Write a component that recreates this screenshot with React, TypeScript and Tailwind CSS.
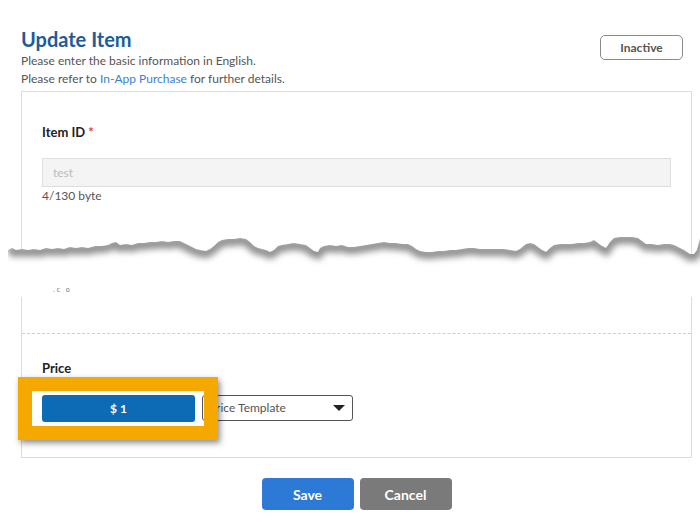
import React from 'react';

const EDGE: [number, number][] = [
  [8, 250], [12, 248], [16, 250], [22, 249], [28, 250], [34, 249], [40, 250], [46, 248], [52, 249],
  [58, 248], [64, 249], [70, 247], [76, 248], [82, 247], [88, 248], [95, 246], [102, 246], [108, 245],
  [112, 243], [116, 242], [120, 245], [126, 244], [132, 245], [138, 243], [144, 243], [150, 242],
  [156, 242], [162, 241], [168, 242], [174, 241], [180, 241], [184, 243], [188, 245], [192, 247],
  [196, 249], [200, 250], [206, 251], [210, 249], [214, 246], [218, 242], [222, 240], [228, 239],
  [234, 239], [240, 238], [246, 239], [250, 242], [254, 246], [258, 248], [262, 249], [266, 250],
  [270, 252], [274, 250], [278, 246], [282, 245], [288, 244], [294, 243], [300, 244], [306, 245],
  [310, 248], [314, 251], [318, 252], [320, 248], [324, 246], [330, 245], [336, 246], [342, 245],
  [348, 247], [354, 247], [360, 246], [366, 245], [372, 244], [378, 243], [384, 242], [390, 243],
  [396, 243], [402, 244], [408, 244], [412, 246], [416, 249], [420, 251], [426, 252], [432, 252],
  [438, 251], [444, 251], [450, 250], [456, 250], [462, 249], [468, 248], [474, 248], [480, 249],
  [486, 249], [492, 249], [498, 249], [504, 249], [510, 250], [516, 251], [520, 249], [526, 244],
  [530, 243], [534, 244], [538, 247], [542, 250], [546, 252], [550, 248], [554, 245], [560, 244],
  [566, 244], [572, 244], [578, 243], [584, 243], [590, 242], [594, 240], [598, 243], [602, 246],
  [606, 248], [610, 242], [614, 238], [620, 237], [626, 237], [632, 237], [638, 238], [642, 241],
  [646, 244], [652, 244], [658, 245], [664, 244], [670, 244], [674, 245], [678, 247], [684, 250],
  [690, 254], [694, 254], [697, 250], [700, 238],
];

function TornEdge() {
  const line = EDGE.map(([x, y]) => `${x},${y}`).join(' ');
  const below = `${line} 700,275 8,275`;
  const shadow = EDGE.map(([x, y]) => `${x},${y + 2}`).join(' ');
  return (
    <svg
      className="absolute left-0 top-[225px] h-[50px] w-[700px]"
      viewBox="0 225 700 50"
      aria-hidden
    >
      <defs>
        <clipPath id="belowEdge">
          <polygon points={below} />
        </clipPath>
        <filter id="tearBlur" x="-5%" y="-100%" width="110%" height="300%">
          <feGaussianBlur stdDeviation="3.2" />
        </filter>
      </defs>
      <polygon points={below} fill="#ffffff" />
      <g clipPath="url(#belowEdge)">
        <polyline points={shadow} fill="none" stroke="#909090" strokeWidth="10" filter="url(#tearBlur)" />
      </g>
    </svg>
  );
}

export default function App() {
  return (
    <div className="relative h-[525px] w-[700px] overflow-hidden bg-white pt-[26px] font-['Lato',sans-serif] text-[#555]">
      <div className="flex items-start justify-between pl-[21px] pr-[17px]">
        <div>
          <h1 className="text-[20px] font-bold leading-[26px] text-[#1d5c98]">Update Item</h1>
          <p className="text-[12px] leading-[18px]">Please enter the basic information in English.</p>
          <p className="text-[12px] leading-[18px]">
            Please refer to <span className="text-[#3a7fd5]">In-App Purchase</span> for further details.
          </p>
        </div>
        <button
          type="button"
          className="mt-[9px] h-[25px] w-[83px] rounded-[5px] border border-[#8a8a8a] text-[12px] font-bold text-[#555]"
        >
          Inactive
        </button>
      </div>

      <div className="ml-[21px] mt-[3px] h-[181px] w-[671px] border-x border-t border-[#dcdcdc] px-[20px] pt-[31px]">
        <label className="block text-[13px] font-bold leading-[18px] text-[#222]">
          Item ID <span className="text-[#e03b3b]">*</span>
        </label>
        <div className="mt-[17px] flex h-[29px] items-center border border-[#dedede] bg-[#f4f4f4] pl-[10px] text-[12px] text-[#bbb]">
          test
        </div>
        <p className="text-[12px] leading-[18px]">4/130 byte</p>
      </div>

      <div className="h-[25px] pl-[53px] pt-[13px] text-[7px] leading-[8px] tracking-[2px] text-[#777]">.c o</div>

      <div className="ml-[21px] h-[161px] w-[671px] border-x border-b border-[#dcdcdc]">
        <div className="h-[36px]" />
        <div className="border-t border-dashed border-[#bfd6d6] px-[20px] pt-[25px]">
          <label className="block text-[13px] font-bold leading-[18px] text-[#222]">Price</label>
          <div className="mt-[18px] flex items-start gap-[7px]">
            <button
              type="button"
              className="h-[27px] w-[153px] rounded-[3px] bg-[#0d6bb6] text-[12px] font-bold text-white"
            >
              $ 1
            </button>
            <div className="flex h-[26px] w-[151px] items-center justify-between rounded-[3px] border border-[#555] pl-[6px] pr-[7px] text-[12px] text-[#555]">
              <span>Price Template</span>
              <span className="h-0 w-0 border-x-[6px] border-t-[6px] border-x-transparent border-t-[#222]" />
            </div>
          </div>
        </div>
      </div>

      <div className="ml-[21px] mt-[20px] flex w-[671px] justify-center gap-[6px]">
        <button type="button" className="h-[32px] w-[92px] rounded-[4px] bg-[#2d7ad6] text-[14px] font-bold text-white">
          Save
        </button>
        <button type="button" className="h-[32px] w-[92px] rounded-[4px] bg-[#7a7a7a] text-[14px] font-bold text-white">
          Cancel
        </button>
      </div>

      <TornEdge />

      <div className="absolute left-[18px] top-[377px] h-[63px] w-[200px] border-[14px] border-[#f5a800] shadow-[2px_3px_6px_rgba(0,0,0,0.45)]" />
    </div>
  );
}
